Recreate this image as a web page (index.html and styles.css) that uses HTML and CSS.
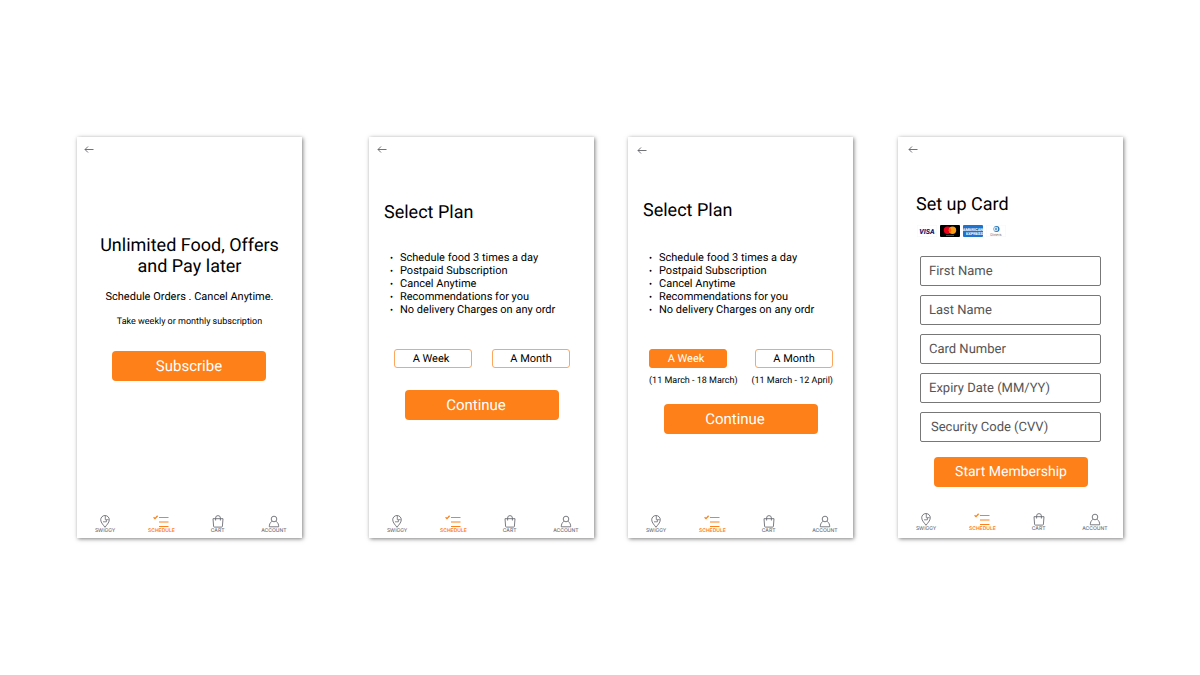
FILE: index.html
```html
<!DOCTYPE html>
<html lang="en">
<head>
    <meta charset="UTF-8">
    <meta name="viewport" content="width=device-width, initial-scale=1.0">
    <title>Swiggy Schedule</title>
    <link rel="stylesheet" href="styles.css">
</head>
<body>
    <!-- Shared icons -->
    <svg class="sprite" aria-hidden="true">
        <symbol id="back" viewBox="0 0 10 8">
            <path d="M9.5 3.500H1M4 .5L1 3.500l3 3" fill="none" stroke="currentColor" stroke-width="0.9"/>
        </symbol>
        <symbol id="pin" viewBox="0 0 12 13">
            <path d="M6 12.3C4.8 10.4 1.7 7.700 1.700 4.800a4.300 4.300 0 0 1 8.600 0C10.300 7.700 7.200 10.400 6 12.300z" fill="none" stroke="currentColor" stroke-width="0.9"/>
            <path d="M6.300 1v3.700h3.400M4 6.800h3.400V5" fill="none" stroke="currentColor" stroke-width="0.8"/>
        </symbol>
        <symbol id="schedule" viewBox="0 0 16 13">
            <path d="M6 2.500H15.500M6 7H15.500M6 11.500H15.500" fill="none" stroke="currentColor" stroke-width="1.200"/>
            <path d="M.6 2.200l1.400 1.400L4.600.8" fill="none" stroke="currentColor" stroke-width="1.300"/>
        </symbol>
        <symbol id="cart" viewBox="0 0 12 13">
            <path d="M1 3.700h10l-.6 7.700q-.1.700-.8.700H2.400q-.7 0-.8-.7zM3.600 5.500V3a2.400 2.400 0 0 1 4.800 0v2.500" fill="none" stroke="currentColor" stroke-width="0.9"/>
        </symbol>
        <symbol id="account" viewBox="0 0 12 13">
            <circle cx="6" cy="4" r="2.800" fill="none" stroke="currentColor" stroke-width="0.9"/>
            <path d="M3.800 6.400C2 7.600 1.300 9.500 1.300 11.800h9.400c0-2.300-.7-4.200-2.500-5.400" fill="none" stroke="currentColor" stroke-width="0.9"/>
        </symbol>
    </svg>

    <main class="screens">
        <section class="screen screen-intro">
            <button class="back" aria-label="Back"><svg><use href="#back"/></svg></button>
            <div class="intro">
                <h1>Unlimited Food, Offers<br>and Pay later</h1>
                <p class="lead">Schedule Orders . Cancel Anytime.</p>
                <p class="note">Take weekly or monthly subscription</p>
            </div>
            <button class="primary">Subscribe</button>
            <nav class="tabs">
                <a href="#"><svg><use href="#pin"/></svg>SWIGGY</a>
                <a href="#" class="active"><svg><use href="#schedule"/></svg>SCHEDULE</a>
                <a href="#"><svg><use href="#cart"/></svg>CART</a>
                <a href="#"><svg><use href="#account"/></svg>ACCOUNT</a>
            </nav>
        </section>

        <section class="screen screen-plan">
            <button class="back" aria-label="Back"><svg><use href="#back"/></svg></button>
            <h2>Select Plan</h2>
            <ul class="features">
                <li>Schedule food 3 times a day</li>
                <li>Postpaid Subscription</li>
                <li>Cancel Anytime</li>
                <li>Recommendations for you</li>
                <li>No delivery Charges on any ordr</li>
            </ul>
            <div class="plans">
                <div class="plan"><button class="week">A Week</button></div>
                <div class="plan"><button>A Month</button></div>
            </div>
            <button class="primary continue">Continue</button>
            <nav class="tabs">
                <a href="#"><svg><use href="#pin"/></svg>SWIGGY</a>
                <a href="#" class="active"><svg><use href="#schedule"/></svg>SCHEDULE</a>
                <a href="#"><svg><use href="#cart"/></svg>CART</a>
                <a href="#"><svg><use href="#account"/></svg>ACCOUNT</a>
            </nav>
        </section>

        <section class="screen screen-dates">
            <button class="back" aria-label="Back"><svg><use href="#back"/></svg></button>
            <h2>Select Plan</h2>
            <ul class="features">
                <li>Schedule food 3 times a day</li>
                <li>Postpaid Subscription</li>
                <li>Cancel Anytime</li>
                <li>Recommendations for you</li>
                <li>No delivery Charges on any ordr</li>
            </ul>
            <div class="plans">
                <div class="plan"><button class="week selected">A Week</button><span>(11 March - 18 March)</span></div>
                <div class="plan"><button>A Month</button><span>(11 March - 12 April)</span></div>
            </div>
            <button class="primary continue">Continue</button>
            <nav class="tabs">
                <a href="#"><svg><use href="#pin"/></svg>SWIGGY</a>
                <a href="#" class="active"><svg><use href="#schedule"/></svg>SCHEDULE</a>
                <a href="#"><svg><use href="#cart"/></svg>CART</a>
                <a href="#"><svg><use href="#account"/></svg>ACCOUNT</a>
            </nav>
        </section>

        <section class="screen screen-card">
            <button class="back" aria-label="Back"><svg><use href="#back"/></svg></button>
            <h2>Set up Card</h2>
            <div class="brands">
                <svg viewBox="0 0 20 12" role="img" aria-label="Visa">
                    <rect x=".25" y=".25" width="19.500" height="11.500" rx="1" fill="#fff" stroke="#f3f3f3" stroke-width=".5"/>
                    <text class="visa" x="10" y="8.500" text-anchor="middle">VISA</text>
                </svg>
                <svg viewBox="0 0 20 12" role="img" aria-label="Mastercard">
                    <rect width="20" height="12" rx="1" fill="#000"/>
                    <circle cx="7.500" cy="5.300" r="3.700" fill="#eb001b"/>
                    <circle cx="12.500" cy="5.300" r="3.700" fill="#f79e1b"/>
                    <path d="M10 2.600a3.700 3.700 0 0 1 0 5.400 3.700 3.700 0 0 1 0-5.400z" fill="#ff5f00"/>
                    <path d="M6 10.400h8" stroke="#777" stroke-width=".7"/>
                </svg>
                <svg viewBox="0 0 20 12" role="img" aria-label="American Express">
                    <rect width="20" height="12" rx="1" fill="#1f72cd"/>
                    <text class="amex" x="10" y="5.500" text-anchor="middle">AMERICAN</text>
                    <text class="amex" x="11.500" y="9.800" text-anchor="middle">EXPRESS</text>
                </svg>
                <svg viewBox="0 0 20 12" role="img" aria-label="Diners Club">
                    <rect x=".25" y=".25" width="19.500" height="11.500" rx="1" fill="#fff" stroke="#f3f3f3" stroke-width=".5"/>
                    <circle cx="10.500" cy="4" r="3" fill="#1f72b8"/>
                    <circle cx="10" cy="4" r="2.200" fill="#fff"/>
                    <path d="M9.300 2.600v2.800M10.700 2.600v2.800" stroke="#1f72b8" stroke-width=".8"/>
                    <text class="diners" x="10" y="10.800" text-anchor="middle">Diners</text>
                </svg>
            </div>
            <form class="card-form">
                <input type="text" placeholder="First Name" aria-label="First Name">
                <input type="text" placeholder="Last Name" aria-label="Last Name">
                <input type="text" placeholder="Card Number" aria-label="Card Number">
                <input type="text" placeholder="Expiry Date (MM/YY)" aria-label="Expiry Date (MM/YY)">
                <input type="text" class="cvv" placeholder="Security Code (CVV)" aria-label="Security Code (CVV)">
                <button type="button" class="primary">Start Membership</button>
            </form>
            <nav class="tabs">
                <a href="#"><svg><use href="#pin"/></svg>SWIGGY</a>
                <a href="#" class="active"><svg><use href="#schedule"/></svg>SCHEDULE</a>
                <a href="#"><svg><use href="#cart"/></svg>CART</a>
                <a href="#"><svg><use href="#account"/></svg>ACCOUNT</a>
            </nav>
        </section>
    </main>
</body>
</html>
```

FILE: styles.css
```css
* {
    margin: 0;
    padding: 0;
    box-sizing: border-box;
}

body {
    font-family: Roboto, sans-serif;
    background: #ffffff;
    min-height: 100vh;
    display: flex;
    align-items: center;
    color: #000000;
    text-rendering: geometricPrecision;
}

button,
input {
    font-family: inherit;
    text-rendering: inherit;
}

button {
    border: none;
    background: none;
    cursor: pointer;
}

.sprite {
    display: none;
}

.screens {
    flex: 1;
    display: flex;
    padding: 0 77px;
}

.screen {
    flex: 1;
    min-width: 0;
    min-height: 401px;
    display: flex;
    flex-direction: column;
    background: #ffffff;
    box-shadow: 1px 1px 4px rgba(0, 0, 0, 0.5);
}

.screen-plan {
    margin-left: 67px;
}

.screen-dates {
    margin-left: 34px;
}

.screen-card {
    margin-left: 45px;
}

.back {
    align-self: flex-start;
    margin: 9px 0 0 7px;
    color: #62626a;
}

.back svg {
    display: block;
    width: 10px;
    height: 8px;
}

.screen-plan .back {
    margin-left: 8px;
}

.screen-dates .back {
    margin: 10px 0 0 9px;
}

.screen-card .back {
    margin-left: 10px;
}

h1,
h2 {
    font-size: 18px;
    font-weight: 400;
    line-height: 21px;
}

/* Intro */
.intro {
    text-align: center;
    margin-top: 81px;
}

.lead {
    font-size: 11px;
    line-height: 14px;
    margin-top: 13px;
}

.note {
    font-size: 9px;
    line-height: 12px;
    margin-top: 12px;
}

.primary {
    height: 30px;
    margin: 0 35px 0 36px;
    border-radius: 4px;
    background: #fd8019;
    color: #ffffff;
    font-size: 15px;
}

.screen-intro .primary {
    margin: 23px 36px 0 35px;
}

/* Plans */
.screen-plan h2,
.screen-dates h2 {
    margin: 48px 0 0 15px;
}

.screen-dates h2 {
    margin-top: 45px;
}

.features {
    margin: 28px 0 0 31px;
    list-style: none;
    font-size: 11px;
    line-height: 13px;
}

.screen-dates .features {
    margin-top: 30px;
}

.features li {
    display: flex;
    align-items: baseline;
}

.features li::before {
    content: '•';
    width: 10px;
    margin-left: -10px;
    font-size: 9px;
    line-height: 9px;
}

.plans {
    display: flex;
    justify-content: space-between;
    margin: 33px 24px 0 25px;
}

.plan {
    display: flex;
    flex-direction: column;
    align-items: flex-end;
}

.plan:first-child {
    align-items: flex-start;
}

.plan button {
    width: 78px;
    height: 19px;
    border: 1px solid #fda65e;
    border-radius: 3px;
    color: #000000;
    font-size: 11px;
}

.plan .week {
    padding-right: 4px;
}

.plan .selected {
    background: #fd8019;
    border-color: #fd8019;
    color: #ffffff;
}

.plan span {
    margin-top: 7px;
    font-size: 9px;
    line-height: 12px;
}

.screen-dates .plans {
    margin: 33px 20px 0 21px;
}

.continue {
    margin-top: 22px;
    padding-right: 12px;
}

.screen-dates .continue {
    margin-top: 17px;
}

/* Card form */
.screen-card h2 {
    margin: 40px 0 0 18px;
}

.brands {
    display: flex;
    gap: 3px;
    margin: 10px 0 0 19px;
}

.brands svg {
    width: 20px;
    height: 12px;
}

.visa {
    font: italic 900 7px Roboto, sans-serif;
    fill: #1a1f71;
}

.amex {
    font: bold 4px Roboto, sans-serif;
    fill: #ffffff;
}

.diners {
    font: 4px Roboto, sans-serif;
    fill: #777777;
}

.card-form {
    display: flex;
    flex-direction: column;
    gap: 9px;
    margin: 19px 22px 0;
}

.card-form input {
    width: 100%;
    height: 30px;
    padding: 0 8px;
    border: 1px solid #777777;
    border-radius: 2px;
    font-size: 13px;
}

.card-form .cvv {
    padding-left: 10px;
}

.card-form input::placeholder {
    color: #555555;
}

.card-form .primary {
    margin: 6px 13px 0 14px;
    font-size: 14px;
}

/* Bottom tabs */
.tabs {
    display: grid;
    grid-template-columns: repeat(4, 1fr);
    margin-top: auto;
    padding-bottom: 4px;
}

.tabs a {
    display: flex;
    flex-direction: column;
    align-items: center;
    color: #6c6d75;
    font: 500 5px/6px Inter, sans-serif;
    text-decoration: none;
}

.tabs svg {
    width: 16px;
    height: 13px;
}

.tabs .active {
    color: #fd8019;
    font-weight: 600;
}

.screen-card .tabs {
    padding-bottom: 6px;
}

@media (max-width: 1000px) {
    .screens {
        flex-direction: column;
        gap: 40px;
    }

    .screen {
        margin-left: 0;
    }
}
```
